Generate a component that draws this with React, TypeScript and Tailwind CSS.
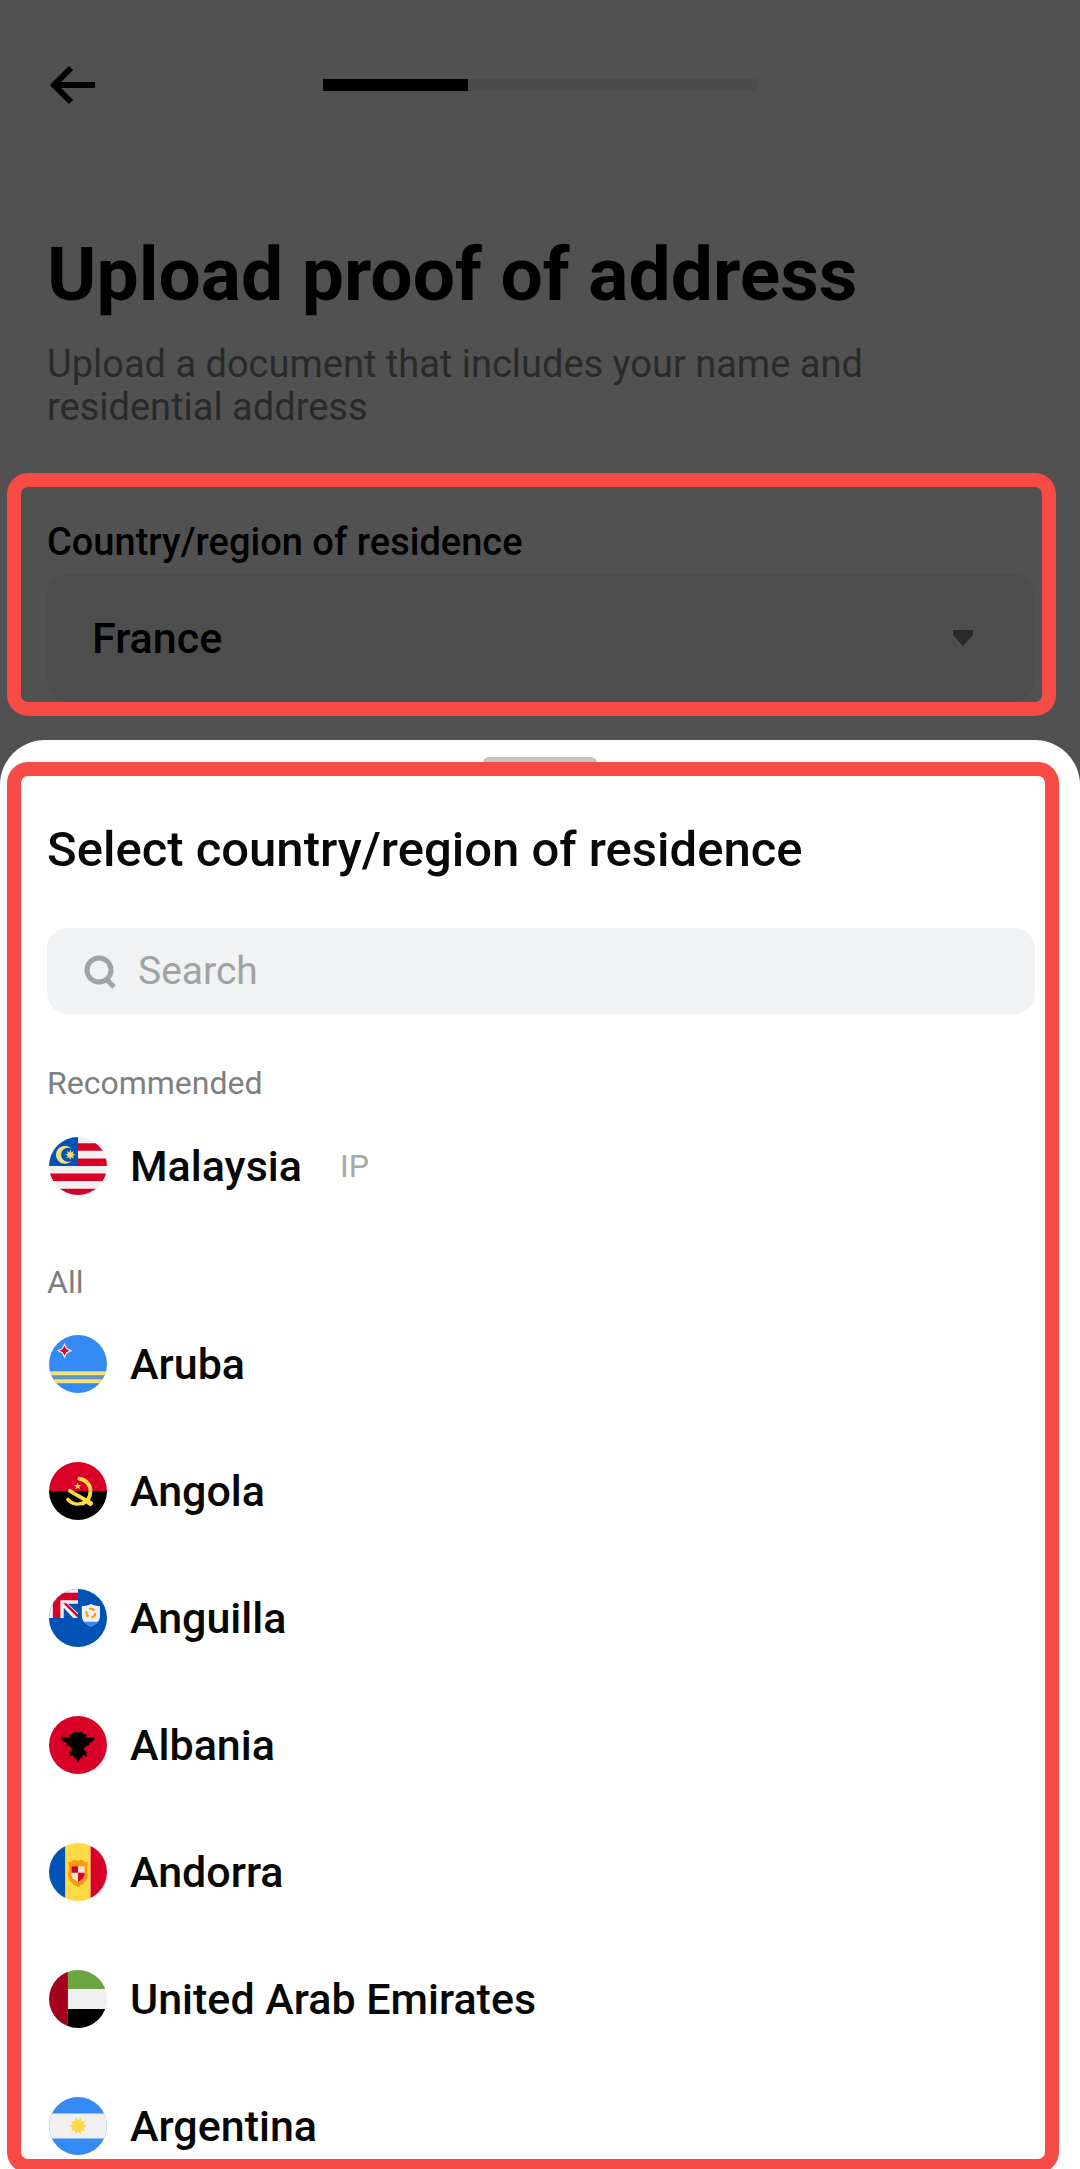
import { useState } from 'react';
import type { ReactNode } from 'react';

const flags: Record<string, ReactNode> = {
  Malaysia: (
    <>
      <path fill="#f0f0f0" d="M0 0h512v512H0z" />
      <path fill="#d80027" d="M256 55h256v67H256zM256 189h256v67H256zM0 322h512v67H0zM0 456h512v56H0z" />
      <path fill="#0052b4" d="M0 0h256v256H0z" />
      <path fill="#f3e077" d="M170 219c-35 0-62-28-62-62s27-62 62-62c10 0 20 2 29 7a80 80 0 1 0 0 110c-9 5-19 7-29 7z" />
      <path fill="#f3e077" d="m188 111 9 25 24-12-12 24 26 9-26 9 12 24-24-12-9 26-9-26-24 12 12-24-26-9 26-9-12-24 24 12z" />
    </>
  ),
  Aruba: (
    <>
      <path fill="#338af3" d="M0 0h512v512H0z" />
      <path fill="#5f97bd" d="M0 356h512v34H0z" />
      <path fill="#f3e077" d="M0 320h512v36H0zM0 390h512v36H0z" />
      <path fill="#f0f0f0" d="m137 68 22 48 48 22-48 22-22 48-22-48-48-22 48-22z" />
      <path fill="#d80027" d="m137 94 15 29 29 15-29 15-15 29-15-29-29-15 29-15z" />
    </>
  ),
  Angola: (
    <>
      <path fill="#d80027" d="M0 0h512v256H0z" />
      <path fill="#000" d="M0 256h512v256H0z" />
      <g fill="none" stroke="#ffda44" strokeLinecap="round">
        <path strokeWidth="34" d="M268 148c60 5 99 58 98 110-1 48-27 88-68 108" />
        <path strokeWidth="34" d="M184 254c48 34 116 67 178 104" />
        <path strokeWidth="30" d="M166 330c40 46 98 52 144 28" />
        <path strokeWidth="44" d="m350 356 16 10" />
      </g>
      <path fill="#ffda44" d="m252 180 9 23 25-1-19 16 8 23-21-13-20 15 6-24-20-15 25-2z" />
    </>
  ),
  Anguilla: (
    <>
      <path fill="#0052b4" d="M0 0h512v512H0z" />
      <path fill="#f0f0f0" d="M0 0h256v256H0z" />
      <path fill="#d80027" d="M34 34h222v66H100v156H34z" />
      <path fill="#0052b4" d="M166 130h90v82zM130 166v90h84z" />
      <path fill="#d80027" d="M126 126h28l102 100v30z" />
      <path fill="#f0f0f0" d="M290 150c26 0 52-4 80-18 28 14 54 18 80 18v88c0 54-44 76-80 92-36-16-80-38-80-92z" />
      <path fill="#338af3" d="M306 290h128c-16 20-38 30-64 40-26-10-48-20-64-40z" />
      <circle cx="369" cy="212" r="38" fill="none" stroke="#ff9811" strokeWidth="20" strokeDasharray="52 28" />
    </>
  ),
  Albania: (
    <>
      <path fill="#d80027" d="M0 0h512v512H0z" />
      <path
        fill="#000"
        d="M404 190H314c12-5 20-14 20-26-8-6-20-4-28-2-6-26-34-30-50-16-16-14-44-10-50 16-8-2-20-4-28 2 0 12 8 21 20 26h-90c0 22 18 40 40 40 0 20 16 36 38 36 6 12 16 20 24 26l-36 32 12 12-10 24 36-18 10 32 12-6 22 44 22-44 12 6 10-32 36 18-10-24 12-12-36-32c8-6 18-14 24-26 22 0 38-16 38-36 22 0 40-18 40-40z"
      />
    </>
  ),
  Andorra: (
    <>
      <path fill="#0052b4" d="M0 0h145v512H0z" />
      <path fill="#ffda44" d="M145 0h222v512H145z" />
      <path fill="#d80027" d="M367 0h145v512H367z" />
      <path fill="#ff9811" d="M167 166c14 8 30 4 38-10 14-8 34-6 51 4 17-10 37-12 51-4 8 14 24 18 38 10l-10 50 8 62c0 54-40 86-87 112-47-26-87-58-87-112l8-62z" />
      <path fill="#f6e9c8" d="M198 206h116v72c0 32-30 50-58 64-28-14-58-32-58-64z" />
      <path fill="#d80027" d="M198 206h58v56h-58zM256 262h58v16c0 32-30 50-58 64z" />
    </>
  ),
  'United Arab Emirates': (
    <>
      <path fill="#f0f0f0" d="M0 0h512v512H0z" />
      <path fill="#6da544" d="M167 0h345v167H167z" />
      <path fill="#000" d="M167 345h345v167H167z" />
      <path fill="#a2001d" d="M0 0h167v512H0z" />
    </>
  ),
  Argentina: (
    <>
      <path fill="#338af3" d="M0 0h512v512H0z" />
      <path fill="#f0f0f0" d="M0 145h512v222H0z" />
      <path
        fill="#ffda44"
        d="m333 256-31 15 17 30-34-7-4 35-25-25-25 25-4-35-34 7 17-30-31-15 31-15-17-30 34 7 4-35 25 25 25-25 4 35 34-7-17 30z"
      />
    </>
  ),
};

const countries = ['Aruba', 'Angola', 'Anguilla', 'Albania', 'Andorra', 'United Arab Emirates', 'Argentina'];

function Country({ name, note }: { name: string; note?: string }) {
  return (
    <button type="button" className="flex h-[127px] w-full items-center text-left">
      <svg viewBox="0 0 512 512" className="ml-[2px] size-[58px] shrink-0 rounded-full" aria-hidden="true">
        {flags[name]}
      </svg>
      <span className="ml-[23px] text-[43px] leading-[50px] font-medium">{name}</span>
      {note && <span className="ml-[38px] text-[32px] leading-[50px] text-[#a6a8aa]">{note}</span>}
    </button>
  );
}

export default function App() {
  const [search, setSearch] = useState('');
  const shown = countries.filter(name => name.toLowerCase().includes(search.toLowerCase()));

  return (
    <div className="flex h-screen flex-col overflow-hidden bg-[#515151] font-[Roboto,sans-serif] text-[#080808]">
      {/* Header */}
      <header className="grid grid-cols-[1fr_44%_1fr] items-center px-[47px] pt-[60px]">
        <button type="button" aria-label="Back" className="w-[54px] text-black">
          <svg viewBox="0 0 54 50" className="h-[50px] w-[54px]" fill="none" stroke="currentColor" strokeWidth="6">
            <path d="M24 8 7 25l17 17M7 25h41" />
          </svg>
        </button>
        <div className="h-3 bg-[#4b4b4d]">
          <div className="h-full w-1/3 bg-black" />
        </div>
      </header>

      <div className="px-[47px] pt-[120px]">
        <h1 className="text-[75px] leading-[88px] font-bold text-black">Upload proof of address</h1>
        <p className="mt-[25px] max-w-[900px] text-[38px] leading-[43px] text-[#2a2a2a]">
          Upload a document that includes your name and residential address
        </p>
      </div>

      {/* Residence field */}
      <section className="mt-[44px] mr-6 ml-[7px] rounded-[21px] border-[14px] border-[#f74b46] pr-2 pl-[26px]">
        <label htmlFor="residence" className="block pt-[33px] text-[38px] leading-[44px] font-medium text-black">
          Country/region of residence
        </label>
        <div className="relative mt-[10px] text-black">
          <select
            id="residence"
            className="block h-[128px] w-full appearance-none rounded-[21px] bg-[#4d4d4d] px-[45px] text-[43px] font-medium"
          >
            <option>France</option>
          </select>
          <svg viewBox="0 0 22 16" className="pointer-events-none absolute top-[56px] right-[60px] h-4 w-[22px]" fill="#2a2a2a">
            <path d="M1 0h20v5L11 16 1 5z" />
          </svg>
        </div>
      </section>

      {/* Bottom sheet */}
      <main className="relative mt-6 flex min-h-0 flex-1 flex-col rounded-t-[45px] bg-white pt-[22px]">
        <div className="absolute top-[17px] left-1/2 h-3 w-[114px] -translate-x-1/2 rounded-md bg-[#c4c4c4]" />
        <section className="relative mr-[21px] -mb-1 ml-[7px] min-h-0 flex-1 overflow-hidden rounded-[21px] border-[14px] border-[#f74b46] bg-white pr-[10px] pl-[26px]">
          <h2 className="pt-[46px] text-[49px] leading-[56px] font-medium">Select country/region of residence</h2>
          <label className="mt-[50px] flex h-[86px] items-center rounded-[21px] bg-[#f0f2f3] pl-[37px]">
            <svg viewBox="0 0 32 36" className="h-9 w-8" fill="none" stroke="#a0a2a3" strokeWidth="5">
              <circle cx="15" cy="17" r="12" />
              <path d="m22 26 8 8" />
            </svg>
            <input
              type="search"
              aria-label="Search"
              placeholder="Search"
              value={search}
              onChange={e => setSearch(e.target.value)}
              className="ml-[22px] min-w-0 flex-1 bg-transparent text-[39px] outline-none placeholder:text-[#a0a2a3]"
            />
          </label>
          <h3 className="mt-[49px] -mb-[1px] text-[32px] leading-[40px] text-[#7d7f80]">Recommended</h3>
          <Country name="Malaysia" note="IP" />
          <h3 className="mt-[33px] -mb-[2px] text-[32px] leading-[40px] text-[#7d7f80]">All</h3>
          {shown.map(name => (
            <Country key={name} name={name} />
          ))}
        </section>
      </main>
    </div>
  );
}
